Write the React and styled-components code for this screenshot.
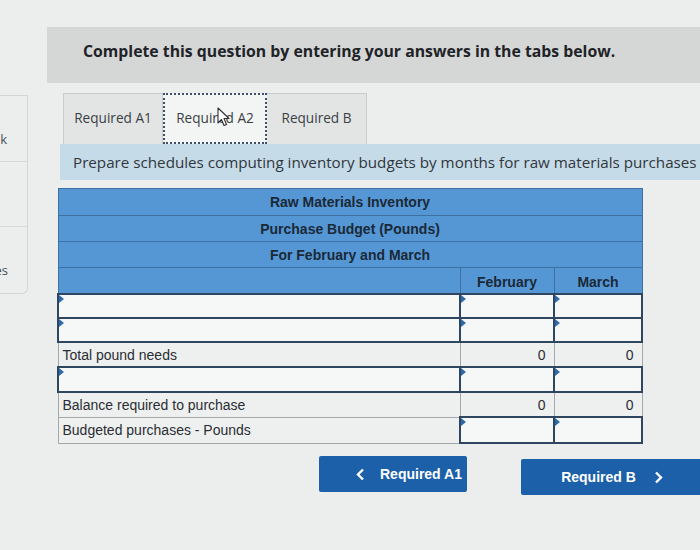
import React from "react";
import styled, { createGlobalStyle } from "styled-components";

const GlobalStyle = createGlobalStyle`
  html, body {
    margin: 0;
    padding: 0;
    background: #eceeed;
    width: 700px;
    height: 550px;
    overflow: hidden;
  }
`;

const Page = styled.div`
  display: flex;
  width: 700px;
  height: 550px;
  overflow: hidden;
  font-family: "Open Sans", "Liberation Sans", sans-serif;
  color: #2b2f33;
`;

const Sidebar = styled.div`
  flex: 0 0 27px;
  margin-top: 95px;
  height: 197px;
  border: 1px solid #d3d6d6;
  border-left: none;
  border-radius: 0 0 6px 0;
  overflow: hidden;
  display: flex;
  flex-direction: column;
`;

const SideItem = styled.div`
  height: ${(p) => p.h}px;
  border-bottom: ${(p) => (p.last ? "none" : "1px solid #d6d9d9")};
  display: flex;
  align-items: flex-end;
  justify-content: flex-end;
  padding-bottom: ${(p) => p.pb || 0}px;
  box-sizing: border-box;
  font-size: 13px;
  color: #4a4f55;
  white-space: nowrap;
  overflow: hidden;
  span {
    margin-right: ${(p) => p.mr || 12}px;
  }
`;

const Main = styled.div`
  flex: 1;
  margin-left: 19px;
  padding-top: 27px;
  min-width: 0;
`;

const Header = styled.div`
  height: 56px;
  box-sizing: border-box;
  padding: 0 0 8px 36px;
  background: #d5d7d7;
  display: flex;
  align-items: center;
  font-weight: 700;
  font-size: 15.8px;
  color: #1f2327;
  white-space: nowrap;
`;

const Tabs = styled.div`
  display: flex;
  margin: 10px 0 0 16px;
`;

const Tab = styled.div`
  position: relative;
  width: ${(p) => p.w}px;
  height: 51px;
  box-sizing: border-box;
  display: flex;
  align-items: center;
  justify-content: center;
  padding-bottom: 3px;
  font-size: 13.6px;
  color: #3a3f44;
  background: ${(p) => (p.active ? "#f3f4f4" : "#e3e5e5")};
  border: ${(p) => (p.active ? "2px dotted #3d4f6a" : "1px solid #c9cccc")};
  border-bottom: ${(p) => (p.active ? "2px dotted #3d4f6a" : "none")};
  margin-right: ${(p) => (p.active ? "-1px" : "0")};
  z-index: ${(p) => (p.active ? 1 : 0)};
`;

const Cursor = styled.svg`
  position: absolute;
  left: 52px;
  top: 12px;
`;

const Instruction = styled.div`
  margin-left: 13px;
  height: 36px;
  background: #c6dbe8;
  padding-left: 13px;
  display: flex;
  align-items: center;
  font-size: 15.2px;
  color: #30363c;
  white-space: nowrap;
`;

const Table = styled.table`
  margin: 8px 0 0 10px;
  width: 584px;
  border-collapse: collapse;
  table-layout: fixed;
  font-family: "Liberation Sans", Arial, sans-serif;
`;

const TitleCell = styled.td`
  background: #5597d5;
  height: ${(p) => p.h}px;
  padding: 0;
  text-align: center;
  font-weight: 700;
  font-size: 14px;
  color: #1b2937;
  border: 1px solid #3e70a0;
  border-bottom: ${(p) => (p.last ? "2px solid #2f4660" : "1px solid #3e70a0")};
`;

const HeadCell = styled(TitleCell)`
  font-size: 14px;
  padding-top: 2px;
`;

const Cell = styled.td`
  height: ${(p) => p.h}px;
  padding: 0 ${(p) => (p.num ? "8px" : "4px")};
  box-sizing: border-box;
  font-size: 14px;
  color: #2a2e33;
  text-align: ${(p) => (p.num ? "right" : "left")};
  background: #eef0ef;
  border: 1px solid #a3a8ab;
`;

const InputCell = styled.td`
  position: relative;
  height: ${(p) => p.h}px;
  padding: 0;
  background: #f6f7f7;
  border: 2px solid #2f4660;

  &::before {
    content: "";
    position: absolute;
    left: 0;
    top: 0;
    border-left: 5px solid #2f6aa8;
    border-top: 4px solid transparent;
    border-bottom: 4px solid transparent;
  }
`;

const Buttons = styled.div`
  display: flex;
  gap: 54px;
  margin: 12px 0 0 272px;
`;

const NavButton = styled.div`
  flex: 0 0 ${(p) => p.w}px;
  height: 36px;
  box-sizing: border-box;
  padding-left: ${(p) => p.pl}px;
  background: #1b60a8;
  border-radius: 2px;
  display: flex;
  align-items: center;
  justify-content: ${(p) => (p.pl ? "flex-start" : "center")};
  gap: ${(p) => p.gap}px;
  color: #fff;
  font-family: "Liberation Sans", Arial, sans-serif;
  font-weight: 700;
  font-size: 14px;
  margin-top: ${(p) => p.drop}px;
`;

const Chevron = styled.svg`
  display: block;
`;

const InputRow = ({ h }) => (
  <tr>
    <InputCell h={h} />
    <InputCell h={h} />
    <InputCell h={h} />
  </tr>
);

const ValueRow = ({ h, label }) => (
  <tr>
    <Cell h={h}>{label}</Cell>
    <Cell h={h} num>0</Cell>
    <Cell h={h} num>0</Cell>
  </tr>
);

export default function App() {
  return (
    <>
      <GlobalStyle />
      <Page>
        <Sidebar>
          <SideItem h={66} pb={13} mr={20}>
            <span>eBook</span>
          </SideItem>
          <SideItem h={65} />
          <SideItem h={65} last pb={13} mr={19}>
            <span>References</span>
          </SideItem>
        </Sidebar>
        <Main>
          <Header>Complete this question by entering your answers in the tabs below.</Header>
          <Tabs>
            <Tab w={100}>Required A1</Tab>
            <Tab w={104} active>
              Required A2
              <Cursor width="14" height="20" viewBox="0 0 14 20">
                <path
                  d="M1 1 L1 16 L4.5 12.5 L7 18.5 L9.5 17.5 L7 11.5 L12 11.5 Z"
                  fill="#ffffff"
                  stroke="#2b2f33"
                  strokeWidth="1.1"
                  strokeLinejoin="round"
                />
              </Cursor>
            </Tab>
            <Tab w={101}>Required B</Tab>
          </Tabs>
          <Instruction>
            Prepare schedules computing inventory budgets by months for raw materials purchases
          </Instruction>
          <Table>
            <colgroup>
              <col style={{ width: 402 }} />
              <col style={{ width: 94 }} />
              <col style={{ width: 88 }} />
            </colgroup>
            <tbody>
              <tr>
                <TitleCell colSpan={3} h={26}>Raw Materials Inventory</TitleCell>
              </tr>
              <tr>
                <TitleCell colSpan={3} h={25}>Purchase Budget (Pounds)</TitleCell>
              </tr>
              <tr>
                <TitleCell colSpan={3} h={25}>For February and March</TitleCell>
              </tr>
              <tr>
                <HeadCell h={23} last></HeadCell>
                <HeadCell h={23} last>February</HeadCell>
                <HeadCell h={23} last>March</HeadCell>
              </tr>
              <InputRow h={22} />
              <InputRow h={22} />
              <ValueRow h={25} label="Total pound needs" />
              <InputRow h={23} />
              <ValueRow h={25} label="Balance required to purchase" />
              <tr>
                <Cell h={26}>Budgeted purchases - Pounds</Cell>
                <InputCell h={23} />
                <InputCell h={23} />
              </tr>
            </tbody>
          </Table>
          <Buttons>
            <NavButton w={148} gap={15} pl={37} drop={0}>
              <Chevron width="9" height="13" viewBox="0 0 9 13">
                <path d="M7 1.5 L2 6.5 L7 11.5" fill="none" stroke="#fff" strokeWidth="2.4" />
              </Chevron>
              Required A1
            </NavButton>
            <NavButton w={182} gap={18} drop={3}>
              Required B
              <Chevron width="9" height="13" viewBox="0 0 9 13">
                <path d="M2 1.5 L7 6.5 L2 11.5" fill="none" stroke="#fff" strokeWidth="2.4" />
              </Chevron>
            </NavButton>
          </Buttons>
        </Main>
      </Page>
    </>
  );
}
